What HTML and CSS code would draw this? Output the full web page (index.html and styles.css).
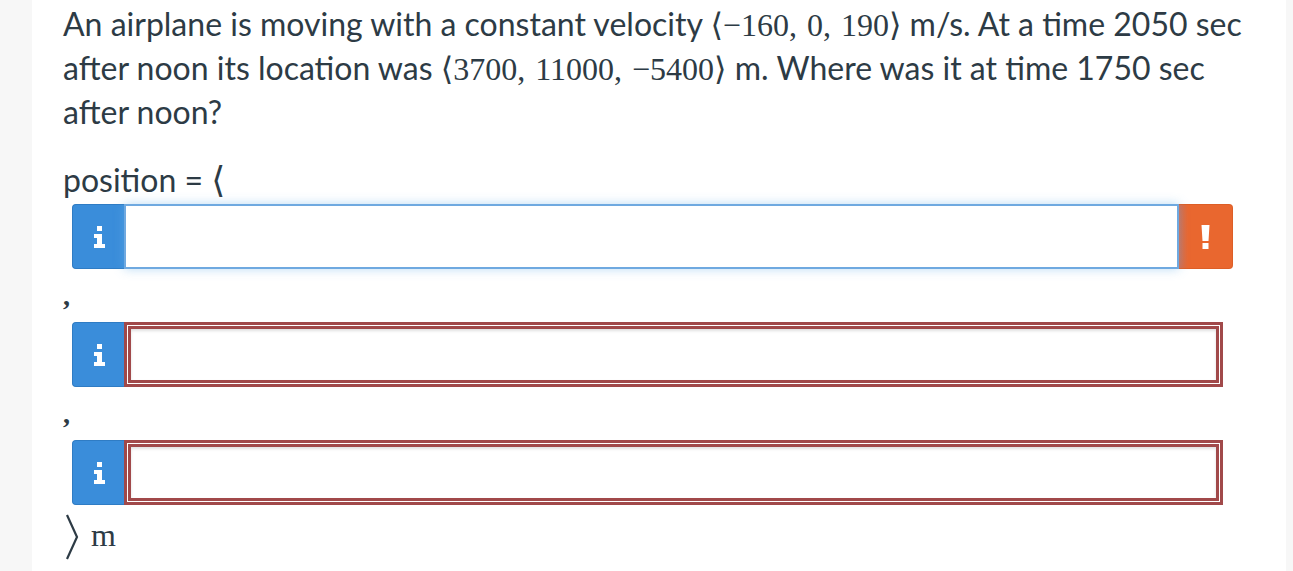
FILE: index.html
```html
<!DOCTYPE html>
<html>
<head>
<meta charset="utf-8">
<link rel="stylesheet" href="styles.css">
</head>
<body>
<div class="page">
  <div class="content">
    <p class="question">An airplane is moving with a constant velocity <span class="math">⟨−160, 0, 190⟩</span> m/s. At a time 2050 sec after noon its location was <span class="math">⟨3700, 11000, −5400⟩</span> m. Where was it at time 1750 sec after noon?</p>
    <div class="label">position = <span class="bracket">⟨</span></div>

    <div class="group">
      <div class="info"><svg width="12" height="22" viewBox="0 0 12 22"><path d="M3 0h5v5H3z M0 8h8v10h3v4H0v-4h3v-6H0z" fill="#fff"/></svg></div>
      <div class="field focused"></div>
      <div class="warn"><svg width="9" height="24" viewBox="0 0 9 24"><path d="M0.5 0h8l-1 16h-6z M1.5 18h6v6h-6z" fill="#fff"/></svg></div>
    </div>

    <div class="sep">,</div>
    <div class="group">
      <div class="info"><svg width="12" height="22" viewBox="0 0 12 22"><path d="M3 0h5v5H3z M0 8h8v10h3v4H0v-4h3v-6H0z" fill="#fff"/></svg></div>
      <div class="field error"><div class="inner"></div></div>
    </div>

    <div class="sep">,</div>
    <div class="group">
      <div class="info"><svg width="12" height="22" viewBox="0 0 12 22"><path d="M3 0h5v5H3z M0 8h8v10h3v4H0v-4h3v-6H0z" fill="#fff"/></svg></div>
      <div class="field error"><div class="inner"></div></div>
    </div>

    <div class="unit"><svg class="rangle" width="14" height="46" viewBox="0 0 14 46"><path d="M2 1L12 23L2 45" fill="none" stroke="#2d3b45" stroke-width="2.2"/></svg><span class="m">m</span></div>
  </div>
</div>
</body>
</html>
```
FILE: styles.css
```css
html, body {
  margin: 0;
  padding: 0;
  background: #f7f7f7;
}
.page {
  display: flex;
  padding-left: 32px;
  width: 1254px;
  height: 571px;
}
.content {
  background: #fff;
  width: 1254px;
  height: 571px;
  box-sizing: border-box;
  padding: 2px 0 0 31px;
  color: #2d3b45;
  font-family: Lato, "Open Sans", sans-serif;
  overflow: hidden;
}
.question {
  margin: 0;
  font-size: 32px;
  line-height: 44px;
  width: 1200px;
}
.math {
  font-family: "Liberation Serif", "DejaVu Serif", serif;
  font-size: 32px;
  word-spacing: 2px;
  line-height: 20px;
}
.label {
  margin-top: 24px;
  font-size: 32px;
  line-height: 44px;
  height: 44px;
}
.bracket {
  font-family: "Liberation Serif", "DejaVu Serif", serif;
  font-size: 36px;
  line-height: 20px;
}
.group {
  display: flex;
  margin-left: 9px;
  height: 65px;
  margin-top: 2px;
}
.info {
  width: 52px;
  box-sizing: border-box;
  background: #3a8dda;
  border: 1px solid #2f7cc4;
  border-right: none;
  border-radius: 4px 0 0 4px;
  display: flex;
  align-items: center;
  justify-content: center;
}
.info svg { margin-left: 2px; }
.field {
  box-sizing: border-box;
  background: #fff;
}
.field.focused {
  width: 1055px;
  border: 2px solid #6fa9e0;
  box-shadow: 0 0 10px rgba(102, 175, 233, 0.45);
  position: relative;
  z-index: 1;
}
.warn {
  width: 54px;
  box-sizing: border-box;
  background: linear-gradient(90deg, #d36a4a 0, #e9672f 9px, #e9672f 100%);
  border: 1px solid #dd5e26;
  border-left: none;
  border-radius: 0 4px 4px 0;
  display: flex;
  align-items: center;
  justify-content: center;
}
.field.error {
  width: 1099px;
  border: 3px solid #a1494a;
  padding: 1px;
}
.field.error .inner {
  box-sizing: border-box;
  height: 100%;
  border: 3px solid #a1494a;
  box-shadow: inset 0 2px 3px rgba(0,0,0,0.12);
}
.sep {
  font-family: "Liberation Serif", serif;
  font-size: 28px;
  line-height: 20px;
  height: 20px;
  margin-top: 17px;
  margin-bottom: 16px;
  font-weight: bold;
}
.unit {
  display: flex;
  align-items: center;
  margin-top: 9px;
  margin-left: 2px;
}
.rangle { display: block; }
.m {
  font-family: "Liberation Serif", serif;
  font-size: 32px;
  margin-left: 12px;
  margin-top: -4px;
}
```
